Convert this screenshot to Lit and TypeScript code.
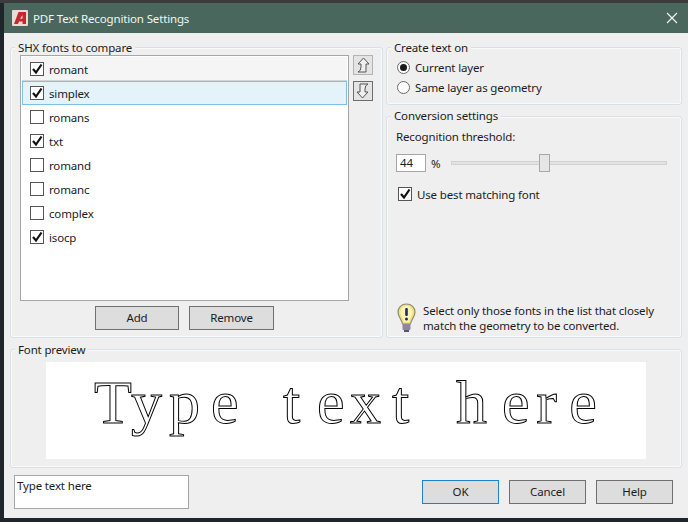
import { LitElement, html, css, svg } from "lit";
import { customElement } from "lit/decorators.js";

const fonts: [string, boolean][] = [
  ["romant", true], ["simplex", true], ["romans", false], ["txt", true],
  ["romand", false], ["romanc", false], ["complex", false], ["isocp", true],
];

// natural advance of each glyph at 62px, and the pitch the preview lays it out at
const natural: Record<string, number> = { T: 37.9, y: 31, p: 31, e: 27.5, " ": 15.5, t: 17.2, x: 31, h: 31, r: 20.6 };
const preview: [string, number][] = [
  ["T", 37], ["y", 38], ["p", 42], ["e", 37], [" ", 35], ["t", 34], ["e", 33], ["x", 42], ["t", 33], [" ", 31],
  ["h", 46], ["e", 34], ["r", 33], ["e", 30],
];

const check = svg`<path d="M2.5 7 L5.5 10.5 L11 2.5" fill="none" stroke="#111" stroke-width="2.2"/>`;

@customElement("app-root")
export class AppRoot extends LitElement {
  static styles = css`
    :host { display: block; width: 688px; height: 522px; overflow: hidden; background: #1f262b;
      font-family: "Noto Sans", sans-serif; font-size: 11.5px; letter-spacing: -0.15px; color: #1c1c1c; }
    * { box-sizing: border-box; }
    .topline { height: 3px; background: #3c3c3c; }
    .dialog { margin-left: 4px; height: 515px; background: #efefef; display: flex; flex-direction: column; }
    .titlebar { height: 30px; background: #4a675d; color: #f2f5f3; display: flex; align-items: center; padding: 0 10px 0 8px; gap: 5px; flex: none; }
    .titlebar .title { flex: 1; }
    .body { padding: 14px 6px 0 6px; display: flex; flex-direction: column; }
    .top { display: grid; grid-template-columns: 373px 296px; column-gap: 3px; height: 291px; }
    .group { position: relative; border: 1px solid #d8e1e9; border-radius: 3px; box-shadow: inset 0 0 0 1px #fafafa; }
    .legend { position: absolute; top: -8px; left: 4px; background: #efefef; padding: 0 3px; line-height: 15px; }
    .conv .legend { top: -9px; }
    .fonts { padding: 7px 9px; }
    .listrow { display: flex; gap: 4px; }
    .list { width: 330px; height: 246px; border: 1px solid #a6a6a6; background: #fff; padding: 1px; }
    .item { height: 24px; display: flex; align-items: center; padding: 1px 0 0 8px; gap: 5px; border: 1px solid transparent; border-right: 0; border-left: 0; }
    .item.first { background: #f5f5f5; border-bottom-color: #d4d4d4; }
    .item.sel { background: #e4f2fa; border: 1px solid #7cc0e8; padding-left: 7px; }
    .cb { width: 14px; height: 14px; border: 1px solid #555; background: #fff; flex: none; display: block; margin-top: -1px; }
    .arrows { display: flex; flex-direction: column; gap: 6px; }
    .arrow { width: 20px; height: 20px; border: 1px solid #b4b4b4; background: #e4e4e4; display: block; }
    .arrow.dark { border-color: #6e6e6e; }
    .actions { display: flex; gap: 10px; margin: 5px 0 0 75px; }
    .btn { height: 24px; background: #dddddd; border: 1px solid #707070; display: flex; align-items: center; justify-content: center; padding-bottom: 1px; }
    .add { width: 84px; } .remove { width: 85px; }
    .right { display: flex; flex-direction: column; gap: 11px; }
    .create { height: 58px; padding: 11px 10px 0; display: flex; flex-direction: column; gap: 3px; }
    .radio { display: flex; align-items: center; gap: 5px; height: 17px; }
    .rd { width: 13px; height: 13px; border-radius: 50%; border: 1px solid #6a6a6a; background: #fff; flex: none; display: flex; align-items: center; justify-content: center; }
    .rd.on::after { content: ""; width: 7px; height: 7px; border-radius: 50%; background: #1a1a1a; }
    .conv { flex: 1; padding: 12px 9px 0; display: flex; flex-direction: column; }
    .thr { display: flex; align-items: center; margin-top: 10px; height: 18px; }
    .pct { width: 30px; height: 18px; border: 1px solid #a6a6a6; background: #fff; padding-left: 3px; line-height: 16px; }
    .pct-sign { margin-left: 5px; width: 20px; }
    .slider { position: relative; width: 216px; height: 4px; background: #e2e2e2; border: 1px solid #d2d2d2; }
    .thumb { position: absolute; left: 87px; top: -8px; width: 11px; height: 18px; background: #e6e6e6; border: 1px solid #a8a8a8; }
    .best { display: flex; align-items: center; gap: 5px; margin: 15px 0 0 2px; }
    .note { display: flex; align-items: center; gap: 7px; margin-top: auto; margin-bottom: 4px; line-height: 15px; }
    .note svg { flex: none; margin-left: 1px; }
    .preview { height: 119px; margin-top: 11px; padding: 12px 0 0 35px; }
    .canvas { width: 600px; height: 97px; background: #fff; overflow: hidden; padding: 0 0 0 48px; }
    .big { font-family: "Liberation Serif", serif; font-size: 62px; line-height: 80px; white-space: pre; letter-spacing: 0;
      color: transparent; -webkit-text-stroke: 1px #000; display: inline-block; }
    .foot { display: flex; align-items: flex-start; margin-top: 7px; padding-left: 4px; }
    .textin { width: 175px; height: 34px; border: 1px solid #a6a6a6; background: #fff; padding: 2px 2px; line-height: 15px; }
    .foot-btns { display: flex; gap: 10px; margin: 5px 0 0 233px; }
    .foot .btn { width: 77px; }
    .ok { border-color: #1f82d0 !important; }
  `;

  private box(on: boolean) {
    return html`<svg class="cb" viewBox="0 0 12 12" width="14" height="14">${on ? svg`<g transform="translate(-0.5,-1)">${check}</g>` : ""}</svg>`;
  }

  render() {
    return html`
      <div class="topline"></div>
      <div class="dialog">
        <div class="titlebar">
          <svg width="16" height="16" viewBox="0 0 16 16">
            <rect width="16" height="16" rx="1" fill="#eadbd6"/>
            <path d="M2 14 L6.5 2 H14 V14 H10.5 V11.5 H7 L6 14 Z M8 8.8 H10.5 V5 Z" fill="#c8262c" fill-rule="evenodd"/>
          </svg>
          <span class="title">PDF Text Recognition Settings</span>
          <svg width="12" height="12" viewBox="0 0 12 12"><path d="M1 1 L11 11 M11 1 L1 11" stroke="#f4f6f5" stroke-width="1.1"/></svg>
        </div>
        <div class="body">
          <div class="top">
            <div class="group fonts">
              <span class="legend">SHX fonts to compare</span>
              <div class="listrow">
                <div class="list">
                  ${fonts.map(([n, on], i) => html`<div class="item ${i === 0 ? "first" : i === 1 ? "sel" : ""}">${this.box(on)}<span>${n}</span></div>`)}
                </div>
                <div class="arrows">
                  <svg class="arrow" viewBox="0 0 18 18"><path d="M9.5 2 L15 8 H12 V16 H4 Q7 15 7 11 V8 H4 Z" fill="#efefef" stroke="#555" stroke-width="1"/></svg>
                  <svg class="arrow dark" viewBox="0 0 18 18"><path d="M8.5 16 L3 10 H6 V2 H14 Q11 3 11 7 V10 H14 Z" fill="#efefef" stroke="#555" stroke-width="1"/></svg>
                </div>
              </div>
              <div class="actions">
                <div class="btn add">Add</div>
                <div class="btn remove">Remove</div>
              </div>
            </div>
            <div class="right">
              <div class="group create">
                <span class="legend">Create text on</span>
                <div class="radio"><span class="rd on"></span>Current layer</div>
                <div class="radio"><span class="rd"></span>Same layer as geometry</div>
              </div>
              <div class="group conv">
                <span class="legend">Conversion settings</span>
                <div>Recognition threshold:</div>
                <div class="thr">
                  <div class="pct">44</div><span class="pct-sign">%</span>
                  <div class="slider"><div class="thumb"></div></div>
                </div>
                <div class="best">${this.box(true)}<span>Use best matching font</span></div>
                <div class="note">
                  <svg width="19" height="30" viewBox="0 0 19 30">
                    <path d="M9.5 1 C4.5 1 1 4.5 1 9 C1 13.5 4.5 16 5.5 21 H13.5 C14.5 16 18 13.5 18 9 C18 4.5 14.5 1 9.5 1 Z" fill="#f3e27a" stroke="#8a8a78" stroke-width="1.2"/>
                    <path d="M9.5 3 C6 3 3.5 5.5 3.5 9 C3.5 12.5 6 15 7 19 H12 C13 15 15.5 12.5 15.5 9 C15.5 5.5 13 3 9.5 3 Z" fill="#fbf3b8"/>
                    <rect x="8.2" y="5" width="2.6" height="8" rx="1" fill="#1d2f55"/>
                    <circle cx="9.5" cy="16" r="1.5" fill="#1d2f55"/>
                    <rect x="5.5" y="21" width="8" height="6" rx="1" fill="#8a86a8"/>
                    <rect x="7" y="27" width="5" height="2" fill="#55536e"/>
                  </svg>
                  <div>Select only those fonts in the list that closely<br />match the geometry to be converted.</div>
                </div>
              </div>
            </div>
          </div>
          <div class="group preview">
            <span class="legend">Font preview</span>
            <div class="canvas"><span class="big">${preview.map(([c, w]) => html`<span style="letter-spacing:${(w - natural[c]).toFixed(1)}px">${c}</span>`)}</span></div>
          </div>
          <div class="foot">
            <div class="textin">Type text here</div>
            <div class="foot-btns">
              <div class="btn ok">OK</div>
              <div class="btn">Cancel</div>
              <div class="btn">Help</div>
            </div>
          </div>
        </div>
      </div>
    `;
  }
}
